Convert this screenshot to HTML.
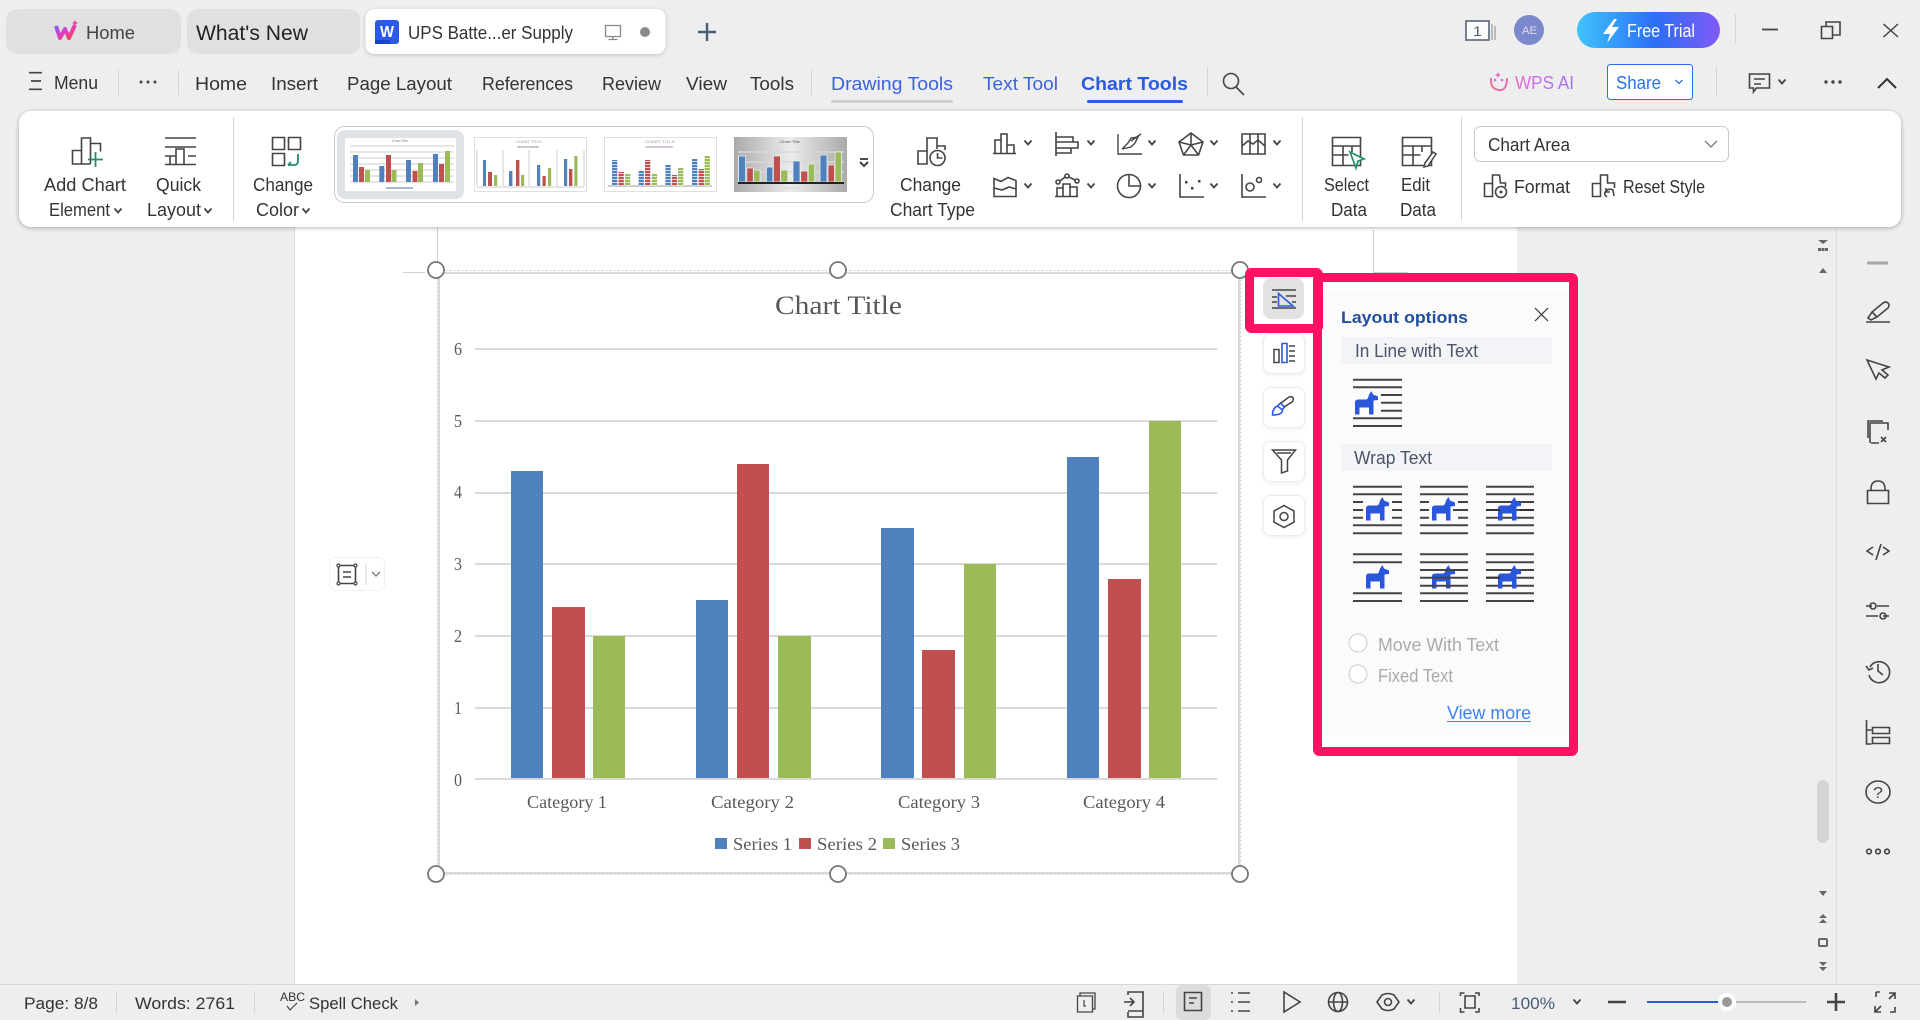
<!DOCTYPE html>
<html><head><meta charset="utf-8"><title>WPS Writer - Chart Tools</title>
<style>
html,body{margin:0;padding:0;background:#eee;width:1920px;height:1020px;overflow:hidden}
svg{display:block}
text{font-family:"Liberation Sans",sans-serif;font-size:18px;fill:#333}
.s{font-family:"Liberation Serif",serif;fill:#595959;font-size:18px}
.i{fill:none;stroke:#444;stroke-width:1.6}
.c{fill:none;stroke:#444;stroke-width:1.8}
.g{fill:none;stroke:#1d8f6b;stroke-width:1.8}
.b{fill:none;stroke:#2a5be0;stroke-width:1.6}
.l{stroke:#444;stroke-width:2;fill:none}
.d{stroke:#d5d5d5;stroke-width:1;fill:none}
.blur{filter:blur(.35px)}
</style></head><body>
<svg width="1920" height="1020" viewBox="0 0 1920 1020" xmlns="http://www.w3.org/2000/svg">
<defs>
<linearGradient id="ft" x1="0" x2="1" y1="0" y2="0"><stop offset="0" stop-color="#3fc4fb"/><stop offset=".55" stop-color="#2b6ef7"/><stop offset="1" stop-color="#8259f5"/></linearGradient>
<linearGradient id="wl" x1="0" x2="1" y1="0" y2="1"><stop offset="0" stop-color="#7a5cf6"/><stop offset=".5" stop-color="#e040c0"/><stop offset="1" stop-color="#f5404f"/></linearGradient>
<linearGradient id="ai" gradientUnits="userSpaceOnUse" x1="1490" x2="1575" y1="0" y2="0"><stop offset="0" stop-color="#f0709a"/><stop offset=".5" stop-color="#d070e0"/><stop offset="1" stop-color="#a070ee"/></linearGradient>
<linearGradient id="th4" x1="0" x2="1" y1="0" y2="0"><stop offset="0" stop-color="#aaa"/><stop offset=".5" stop-color="#ececec"/><stop offset="1" stop-color="#aaa"/></linearGradient>
<pattern id="pb" width="4" height="3" patternUnits="userSpaceOnUse"><rect width="4" height="2" fill="#4f81bd"/><rect y="2" width="4" height="1" fill="#c9d8ea"/></pattern>
<pattern id="pr" width="4" height="3" patternUnits="userSpaceOnUse"><rect width="4" height="2" fill="#c0504d"/><rect y="2" width="4" height="1" fill="#eccfce"/></pattern>
<pattern id="pg" width="4" height="3" patternUnits="userSpaceOnUse"><rect width="4" height="2" fill="#9bbb59"/><rect y="2" width="4" height="1" fill="#e0ebcd"/></pattern>
<symbol id="h" width="23" height="24" viewBox="0 0 23 24" overflow="visible"><path fill="#2a56dc" d="M14 3.500 16.500 0 18 3.500l5 2V9l-4.500.5v14H14v-7H4.500v7H0v-12q0-3 3-3h8q2 0 3-5z"/></symbol>
<symbol id="c" width="10" height="8" viewBox="0 0 10 8"><path d="M1.500 1.500 5 5.500l3.500-4" fill="none" stroke="#444" stroke-width="1.800"/></symbol>
</defs>

<rect width="1920" height="1020" fill="#eeeeee"/>
<!-- tabs -->
<rect x="6" y="9" width="175" height="45" rx="11" fill="#e0e0e0"/>
<rect x="187" y="9" width="173" height="45" rx="11" fill="#e0e0e0"/>
<rect x="365.500" y="9" width="300" height="45" rx="9" fill="#fff" style="filter:drop-shadow(0 1px 2px rgba(0,0,0,.18))"/>
<path d="M56 26l4 12 5-9 4 9 6-13" fill="none" stroke="url(#wl)" stroke-width="4" stroke-linejoin="round"/>
<path d="M74 22l1-2 1 2 2 1-2 1-1 2-1-2-2-1z" fill="#f0409c"/>
<text x="86" y="39" textLength="49" lengthAdjust="spacingAndGlyphs" style="fill:#444">Home</text>
<text x="196" y="40" textLength="112" lengthAdjust="spacingAndGlyphs" style="font-size:21px;fill:#222">What's New</text>
<rect x="375" y="20" width="24" height="24" rx="3" fill="#2a5be8"/><rect x="375" y="40" width="15" height="4" fill="#1b45c0"/>
<text x="380" y="37" textLength="14" lengthAdjust="spacingAndGlyphs" style="font-size:16px;font-weight:700;fill:#fff">W</text>
<text x="408" y="39" textLength="165" lengthAdjust="spacingAndGlyphs" style="fill:#333">UPS Batte...er Supply</text>
<path d="M605.500 25.500h15v11h-15zM613 36.500v3M608.500 39.500h9" class="d" style="stroke:#888;stroke-width:1.300"/>
<circle cx="645" cy="32" r="5" fill="#8a8a8a"/>
<path d="M707 23v18M698 32h18" stroke="#4a5a78" stroke-width="2.400"/>
<!-- top-right -->
<rect x="1466" y="21" width="23" height="19" fill="#fbfbfb" stroke="#5a6478" stroke-width="1.600"/>
<path d="M1492 24v16M1495 26v14" stroke="#999" stroke-width="1.200"/>
<text x="1473" y="36" textLength="9" lengthAdjust="spacingAndGlyphs" style="font-size:14px;fill:#4a5a78">1</text>
<circle cx="1529" cy="30" r="15" fill="#7c88cc"/>
<text x="1522" y="34" textLength="15" lengthAdjust="spacingAndGlyphs" style="font-size:11px;fill:#dde">AE</text>
<rect x="1577" y="12" width="143" height="36" rx="18" fill="url(#ft)"/>
<path d="M1614 19l-11 15h7l-3 9 12-16h-7l5-8z" fill="#fff"/>
<text x="1627" y="37" textLength="68" lengthAdjust="spacingAndGlyphs" style="font-size:18px;fill:#fff">Free Trial</text>
<path d="M1735.500 14v30" class="d"/>
<path d="M1762 29.500h16" stroke="#444" stroke-width="1.800"/>
<path d="M1821.500 26.500h11v12h-11zM1826 26v-4h14v13h-7.500" fill="none" stroke="#444" stroke-width="1.600"/>
<path d="M1883.500 24 1898 37M1898 24l-14.500 13" stroke="#444" stroke-width="1.500"/>
<!-- menu row -->
<path d="M29 72.700h13M31 81h10M29 89.300h13" stroke="#444" stroke-width="1.700"/>
<text x="54" y="89" textLength="44" lengthAdjust="spacingAndGlyphs">Menu</text>
<path d="M118.500 70v25M178.500 70v25M811.500 70v25M1207.500 67v30M1716.500 67v30" class="d"/>
<g fill="#444"><circle cx="141" cy="82" r="1.500"/><circle cx="148" cy="82" r="1.500"/><circle cx="155" cy="82" r="1.500"/></g>
<text x="195" y="90" textLength="52" lengthAdjust="spacingAndGlyphs">Home</text>
<text x="271" y="90" textLength="47" lengthAdjust="spacingAndGlyphs">Insert</text>
<text x="347" y="90" textLength="105" lengthAdjust="spacingAndGlyphs">Page Layout</text>
<text x="482" y="90" textLength="91" lengthAdjust="spacingAndGlyphs">References</text>
<text x="602" y="90" textLength="59" lengthAdjust="spacingAndGlyphs">Review</text>
<text x="686" y="90" textLength="41" lengthAdjust="spacingAndGlyphs">View</text>
<text x="750" y="90" textLength="44" lengthAdjust="spacingAndGlyphs">Tools</text>
<text x="831" y="90" textLength="122" lengthAdjust="spacingAndGlyphs" style="fill:#3a62e0">Drawing Tools</text>
<rect x="831" y="100" width="122" height="3" rx="1.500" fill="#cfcfcf"/>
<text x="983" y="90" textLength="75" lengthAdjust="spacingAndGlyphs" style="fill:#3a62e0">Text Tool</text>
<text x="1081" y="90" textLength="107" lengthAdjust="spacingAndGlyphs" style="font-weight:700;fill:#2a5be0">Chart Tools</text>
<rect x="1087" y="100" width="96" height="3" rx="1.500" fill="#2a5be0"/>
<circle cx="1231" cy="81" r="7.500" class="i"/><path d="M1236 87l8 8" class="i"/>
<path d="M1491 78q-1 11 8 12 8 1 8-12" fill="none" stroke="url(#ai)" stroke-width="2"/>
<circle cx="1495" cy="80" r="1.300" fill="#d070e0"/><circle cx="1502" cy="80" r="1.300" fill="#d070e0"/>
<path d="M1498 72l1 2 2 1-2 1-1 2-1-2-2-1 2-1z" fill="#e56ccf"/>
<text x="1515" y="89" textLength="59" lengthAdjust="spacingAndGlyphs" style="fill:url(#ai)">WPS AI</text>
<rect x="1607.500" y="64.500" width="85" height="35" rx="3" fill="#fff" stroke="#2a6ef0"/>
<text x="1616" y="89" textLength="45" lengthAdjust="spacingAndGlyphs" style="fill:#2a6ef0">Share</text>
<path d="M1675.500 80l3.500 3.500 3.500-3.500" fill="none" stroke="#2a6ef0" stroke-width="1.300"/>
<path d="M1749.500 74h20v14h-13l-3 4v-4h-4z" class="i"/><path d="M1754 79h11M1754 84h7" class="i"/>
<use href="#c" x="1777" y="78"/>
<g fill="#444"><circle cx="1826" cy="82" r="1.700"/><circle cx="1833" cy="82" r="1.700"/><circle cx="1840" cy="82" r="1.700"/></g>
<path d="M1878 88l9-9 9 9" fill="none" stroke="#333" stroke-width="2"/>

<!-- page -->
<rect x="294" y="220" width="1223" height="764" fill="#fff"/>
<path d="M294.500 220v764M1836.500 228v756" stroke="#dcdcdc"/>
<path d="M1373.500 230v42M1373 272.500h35M437.500 228v40M403 272.500h22" stroke="#cfcfcf"/>

<!-- ribbon -->
<rect x="19" y="111" width="1882" height="116" rx="12" fill="#fff" style="filter:drop-shadow(0 1px 2px rgba(0,0,0,.3))"/>
<path d="M233.500 117v104M1302.500 117v104M1461.500 117v104" class="d"/>

<path class="i" d="M72.500 150.500h9v13.500h-9zM81.500 164v-26h9v26M90.500 143.500h10v8M72.500 164h18"/><path class="g" d="M95.500 152v15M88 159.500h15"/>
<text x="44" y="191" textLength="82" lengthAdjust="spacingAndGlyphs">Add Chart</text>
<text x="49" y="216" textLength="61" lengthAdjust="spacingAndGlyphs">Element</text><use href="#c" x="113" y="207"/>
<path class="i" d="M165 138h31M165 147h31M165 156h8M188 156h8M170 164v-8h6v-7h8v15M176 156v8M165 164.500h31"/>
<text x="156" y="191" textLength="45" lengthAdjust="spacingAndGlyphs">Quick</text>
<text x="147" y="216" textLength="54" lengthAdjust="spacingAndGlyphs">Layout</text><use href="#c" x="203" y="207"/>
<path class="i" d="M272.500 137.500h12v12h-12zM288.500 137.500h12v12h-12zM272.500 153.500h12v12h-12z"/><path class="g" d="M298 154v7q0 4-4 4h-6M288 165l3-3"/>
<text x="253" y="191" textLength="60" lengthAdjust="spacingAndGlyphs">Change</text>
<text x="256" y="216" textLength="43" lengthAdjust="spacingAndGlyphs">Color</text><use href="#c" x="301" y="207"/>

<!-- gallery -->
<rect x="334.500" y="126.500" width="539" height="76" rx="10" fill="#fff" stroke="#c9c9c9"/>
<rect x="337" y="130" width="127" height="69" rx="8" fill="#dfe3e7"/>
<g class="blur">
<rect x="345" y="138" width="111" height="53" fill="#fff"/>
<path d="M350 146h104M350 152h104M350 158h104M350 164h104M350 170h104M350 176h104M350 182h104" stroke="#ddd" stroke-width="1.500"/>
<text x="392" y="142" textLength="16" lengthAdjust="spacingAndGlyphs" style="font-size:4px;fill:#777">Chart Title</text>
<g fill="#4f81bd"><rect x="353" y="155" width="5" height="27"/><rect x="379.300" y="166" width="5" height="16"/><rect x="406" y="160" width="5" height="22"/><rect x="433" y="154" width="5" height="28"/></g>
<g fill="#c0504d"><rect x="359" y="167" width="5" height="15"/><rect x="386" y="155" width="5" height="27"/><rect x="412.500" y="171" width="5" height="11"/><rect x="439" y="164" width="5" height="18"/></g>
<g fill="#9bbb59"><rect x="365" y="170" width="5" height="12"/><rect x="391.500" y="170" width="5" height="12"/><rect x="418" y="163" width="5" height="19"/><rect x="445" y="151" width="5" height="31"/></g>
<rect x="386" y="187" width="27" height="2" fill="#a8b8d0"/>

<rect x="474.500" y="137.500" width="112" height="54" fill="#fff" stroke="#e0e0e0"/>
<text x="516" y="143" textLength="26" lengthAdjust="spacingAndGlyphs" style="font-size:4px;fill:#999">CHART TITLE</text>
<path d="M477 150v36M503 150v36M529 150v36M557 150v36M584 150v36M477 187h107" stroke="#ddd" stroke-width="1.500"/>
<rect x="517" y="146" width="22" height="2" fill="#c8c8d8"/>
<g fill="#4f81bd"><rect x="483" y="160" width="3" height="26"/><rect x="509" y="171" width="3.400" height="15"/><rect x="537" y="165" width="3.200" height="21"/><rect x="564" y="159" width="3.200" height="27"/></g>
<g fill="#c0504d"><rect x="488" y="172" width="4" height="14"/><rect x="516" y="160" width="3.400" height="26"/><rect x="542.500" y="176" width="3.200" height="10"/><rect x="569" y="169" width="3.400" height="17"/></g>
<g fill="#9bbb59"><rect x="494" y="175" width="3.200" height="11"/><rect x="521" y="175" width="3.200" height="11"/><rect x="548" y="168" width="3.200" height="18"/><rect x="574.300" y="156" width="3.200" height="30"/></g>

<rect x="604.500" y="137.500" width="112" height="54" fill="#fff" stroke="#e0e0e0"/>
<text x="645" y="143" textLength="30" lengthAdjust="spacingAndGlyphs" style="font-size:4px;fill:#999">CHART TITLE</text>
<rect x="645" y="146" width="28" height="2" fill="#d8c8d8"/>
<path d="M608 186h104" stroke="#ccc" stroke-width="2"/>
<rect x="612" y="160" width="5.300" height="26" fill="url(#pb)"/><rect x="638.600" y="171" width="5.300" height="15" fill="url(#pb)"/><rect x="665.400" y="165" width="5.300" height="21" fill="url(#pb)"/><rect x="692" y="159" width="5.300" height="27" fill="url(#pb)"/>
<rect x="618.500" y="172" width="5.300" height="14" fill="url(#pr)"/><rect x="645" y="160" width="5.300" height="26" fill="url(#pr)"/><rect x="671.800" y="175" width="5.300" height="11" fill="url(#pr)"/><rect x="698.600" y="169" width="5.300" height="17" fill="url(#pr)"/>
<rect x="625" y="174" width="5.300" height="12" fill="url(#pg)"/><rect x="651.800" y="174" width="5.300" height="12" fill="url(#pg)"/><rect x="678" y="168" width="5.300" height="18" fill="url(#pg)"/><rect x="704.600" y="156" width="5.300" height="30" fill="url(#pg)"/>

<rect x="734" y="137" width="113" height="55" fill="url(#th4)"/>
<text x="780" y="143" textLength="20" lengthAdjust="spacingAndGlyphs" style="font-size:4px;fill:#555">Chart Title</text>
<path d="M738 152h106M738 162h106M738 172h106" stroke="#d8d8d8" stroke-width="1.500"/>
<g stroke="#e8eef6" stroke-width=".8">
<g fill="#4f81bd"><rect x="738.600" y="156" width="7" height="26"/><rect x="766.400" y="167" width="6.500" height="15"/><rect x="793" y="161" width="7" height="21"/><rect x="820" y="155" width="7" height="27"/></g>
<g fill="#c0504d"><rect x="746.800" y="168" width="6.500" height="14"/><rect x="773.400" y="156" width="7" height="26"/><rect x="800.700" y="171" width="7" height="11"/><rect x="828" y="165" width="6.500" height="17"/></g>
<g fill="#9bbb59"><rect x="753.600" y="170" width="6.500" height="12"/><rect x="780.700" y="170" width="7" height="12"/><rect x="808.200" y="164" width="6.500" height="18"/><rect x="835" y="152" width="6.500" height="30"/></g>
</g>
<rect x="738" y="182" width="106" height="2" fill="#222"/>
<rect x="776" y="187" width="26" height="2" fill="#ddd"/>
</g>
<path d="M860 159h8M860 162l4 4 4-4" fill="none" stroke="#333" stroke-width="1.800"/>

<path class="i" d="M918 151h9v13h-9zM927 164v-26h10v11M937 146h8v4"/><circle cx="937.500" cy="158" r="7.500" fill="#fff" stroke="#444" stroke-width="1.600"/><path class="i" d="M937.500 153v5h5"/>
<text x="900" y="191" textLength="61" lengthAdjust="spacingAndGlyphs">Change</text>
<text x="890" y="216" textLength="85" lengthAdjust="spacingAndGlyphs">Chart Type</text>

<!-- chart type icons -->
<path class="i" d="M993 153.500h23M995 153v-13h6v13M1001 153v-19h6v19M1007 153v-8h7v8"/><use href="#c" x="1023" y="139"/>
<path class="i" d="M1056 132v24M1056 137h17v5h-17zM1056 142h22v6h-22zM1056 148h15v5h-15z"/><use href="#c" x="1086" y="139"/>
<path class="i" style="stroke-width:1.400" d="M1118 134v20h24M1122 149l6-6 3-5 7-1-3 6-4 4-9 2M1131 141l10-7"/><use href="#c" x="1147" y="139"/>
<path class="i" d="M1191 133l12 9-4.500 13h-15L1179 142zM1191 145v-12M1191 145l12-3M1191 145l7.500 10M1191 145l-7.500 10M1191 145l-12-3"/><use href="#c" x="1209" y="139"/>
<path class="i" d="M1242 134h23v20h-23zM1250 134v20M1258 134v20M1242 146l6-5 5 3 5-4 7 6"/><use href="#c" x="1272" y="139"/>
<path class="i" d="M994 196.500v-18l7 3 7-4 8 3v16zM994 188l8 2 7-3 7 2"/><use href="#c" x="1023" y="182"/>
<path class="i" d="M1055 196.500h23M1057 196v-8h6v8M1063 196v-12h7v12M1070 196v-9h7v9"/><circle class="i" cx="1058" cy="182" r="2"/><circle class="i" cx="1067" cy="176" r="2"/><circle class="i" cx="1077" cy="181" r="2"/><path class="i" d="M1060 181l5-4M1069 177l6 3"/><use href="#c" x="1086" y="182"/>
<circle class="i" cx="1129" cy="186" r="11.500"/><path class="i" d="M1129 174.500V186h11.500"/><use href="#c" x="1147" y="182"/>
<path class="i" d="M1180 174v23h24"/><g fill="#444"><rect x="1185" y="181" width="2.500" height="2.500"/><rect x="1191" y="187" width="2.500" height="2.500"/><rect x="1198" y="180" width="2.500" height="2.500"/></g><use href="#c" x="1209" y="182"/>
<path class="i" d="M1242 174v23h24"/><circle class="i" cx="1250" cy="187" r="4"/><circle class="i" cx="1259" cy="180" r="2.500"/><use href="#c" x="1272" y="182"/>

<path class="i" d="M1332.500 137.500h28v28h-28zM1332.500 146h28M1332.500 155h16M1343 146v19M1352 146v6"/><path d="M1350 152l14 7-6 2-2 7z" fill="#fff" stroke="#1d8f6b" stroke-width="1.700"/>
<text x="1324" y="191" textLength="45" lengthAdjust="spacingAndGlyphs">Select</text>
<text x="1331" y="216" textLength="36" lengthAdjust="spacingAndGlyphs">Data</text>
<path class="i" d="M1402.500 137.500h29v28h-29zM1402.500 146h29M1402.500 155h18M1413 146v19M1422 146v6"/><path d="M1433 152l3 2-8 12-4 1 1-4z" fill="#fff" stroke="#444" stroke-width="1.500"/>
<text x="1401" y="191" textLength="29" lengthAdjust="spacingAndGlyphs">Edit</text>
<text x="1400" y="216" textLength="36" lengthAdjust="spacingAndGlyphs">Data</text>

<rect x="1474.500" y="126.500" width="254" height="35" rx="6" fill="#fff" stroke="#c9c9c9"/>
<text x="1488" y="151" textLength="82" lengthAdjust="spacingAndGlyphs">Chart Area</text>
<path d="M1705 141l6 6 6-6" fill="none" stroke="#777" stroke-width="1.300"/>
<path class="i" d="M1484.500 183.500h8v13h-8zM1492.500 196V175h7l1 8h5v4"/><circle cx="1501" cy="192" r="5.500" fill="#fff" stroke="#444" stroke-width="1.600"/><circle cx="1501" cy="192" r="1.500" fill="#444"/>
<text x="1514" y="193" textLength="56" lengthAdjust="spacingAndGlyphs">Format</text>
<path class="i" d="M1592.500 183.500h8v13h-8zM1600.500 183v-8h7v8h7v5M1607 197q-4-3-1-6 3-3 7-1l1 6M1606 188v4h4"/>
<text x="1623" y="193" textLength="82" lengthAdjust="spacingAndGlyphs">Reset Style</text>

<!-- chart -->
<rect x="439" y="273" width="800" height="600" fill="#fff" stroke="#d9d9d9" stroke-width="2"/>
<rect x="437.500" y="270.500" width="803" height="604" fill="none" stroke="#ccc" stroke-dasharray="2 2"/>
<g stroke="#d9d9d9" stroke-width="2">
<path d="M475 349h742M475 421h742M475 493h742M475 564h742M475 636h742M475 708h742M475 779h742"/>
</g>
<text class="s" x="775" y="314" textLength="127" lengthAdjust="spacingAndGlyphs" style="font-size:26px">Chart Title</text>
<g>
<text class="s" x="454" y="355" textLength="8" lengthAdjust="spacingAndGlyphs">6</text><text class="s" x="454" y="427" textLength="8" lengthAdjust="spacingAndGlyphs">5</text><text class="s" x="454" y="498" textLength="8" lengthAdjust="spacingAndGlyphs">4</text><text class="s" x="454" y="570" textLength="8" lengthAdjust="spacingAndGlyphs">3</text><text class="s" x="454" y="642" textLength="8" lengthAdjust="spacingAndGlyphs">2</text><text class="s" x="454" y="714" textLength="8" lengthAdjust="spacingAndGlyphs">1</text><text class="s" x="454" y="786" textLength="8" lengthAdjust="spacingAndGlyphs">0</text>
</g>
<g fill="#4f81bd"><rect x="511" y="471" width="32" height="307"/><rect x="696" y="600" width="32" height="178"/><rect x="881" y="528" width="33" height="250"/><rect x="1067" y="457" width="32" height="321"/></g>
<g fill="#c0504d"><rect x="552" y="607" width="33" height="171"/><rect x="737" y="464" width="32" height="314"/><rect x="922" y="650" width="33" height="128"/><rect x="1108" y="579" width="33" height="199"/></g>
<g fill="#9bbb59"><rect x="593" y="636" width="32" height="142"/><rect x="778" y="636" width="33" height="142"/><rect x="964" y="564" width="32" height="214"/><rect x="1149" y="421" width="32" height="357"/></g>
<text class="s" x="527" y="808" textLength="80" lengthAdjust="spacingAndGlyphs">Category 1</text>
<text class="s" x="711" y="808" textLength="83" lengthAdjust="spacingAndGlyphs">Category 2</text>
<text class="s" x="898" y="808" textLength="82" lengthAdjust="spacingAndGlyphs">Category 3</text>
<text class="s" x="1083" y="808" textLength="82" lengthAdjust="spacingAndGlyphs">Category 4</text>
<rect x="715" y="838" width="12" height="11" fill="#4f81bd"/><text class="s" x="733" y="850" textLength="59" lengthAdjust="spacingAndGlyphs">Series 1</text>
<rect x="799" y="838" width="12" height="11" fill="#c0504d"/><text class="s" x="817" y="850" textLength="60" lengthAdjust="spacingAndGlyphs">Series 2</text>
<rect x="883" y="838" width="12" height="11" fill="#9bbb59"/><text class="s" x="901" y="850" textLength="59" lengthAdjust="spacingAndGlyphs">Series 3</text>
<g fill="#fff" stroke="#777" stroke-width="1.800">
<circle cx="436" cy="270" r="8"/><circle cx="838" cy="270" r="8"/><circle cx="1240" cy="270" r="8"/><circle cx="436" cy="874" r="8"/><circle cx="838" cy="874" r="8"/><circle cx="1240" cy="874" r="8"/>
</g>
<!-- anchor button -->
<rect x="329.500" y="557.500" width="55" height="33" rx="6" fill="#fff" stroke="#f0f0f0"/>
<path class="i" d="M338.500 565.500h17v18h-17zM343 572h8M343 577h8"/>
<g fill="#fff" stroke="#444" stroke-width="1.200"><circle cx="338.500" cy="565.500" r="1.500"/><circle cx="355.500" cy="565.500" r="1.500"/><circle cx="338.500" cy="583.500" r="1.500"/><circle cx="355.500" cy="583.500" r="1.500"/></g>
<path d="M366 563v22" class="d"/><path d="M372 572l4 4 4-4" fill="none" stroke="#777" stroke-width="1.300"/>

<!-- side buttons -->
<g fill="#fff" stroke="#ececec" style="filter:drop-shadow(0 1px 2px rgba(0,0,0,.07))">
<rect x="1263.500" y="333.500" width="41" height="40" rx="7"/><rect x="1263.500" y="387.500" width="41" height="40" rx="7"/><rect x="1263.500" y="441.500" width="41" height="40" rx="7"/><rect x="1263.500" y="495.500" width="41" height="40" rx="7"/>
</g>
<rect x="1263" y="278" width="41" height="41" rx="8" fill="#e2e2e2"/>
<path d="M1272 290h24M1272 297h5M1272 302h5M1272 308h24M1286 296h10M1292 302h4" stroke="#444" stroke-width="1.400"/>
<path class="b" d="M1278.500 293.500V306H1293z"/>
<path class="c" style="stroke-width:1.500" d="M1274 349.500h5v13h-5z"/><path class="b" d="M1282 343.500h5v19h-5z"/><path d="M1289 346h6M1289 351h6M1289 356h6M1289 361h6" stroke="#444" stroke-width="1.400"/>
<path class="b" d="M1272.500 415q0-7 5-9l5 4q0 5-10 5zM1277.500 406l3-3 4 4-2.500 3"/><path d="M1281 403l8-6q3-1 4 1t-1 4l-8 5" fill="none" stroke="#444" stroke-width="1.500"/>
<path d="M1272.500 450h23l-8 10v11l-6 2v-13z M1277 453h14" fill="none" stroke="#444" stroke-width="1.500"/>
<path d="M1284 505.500l10 5.500v11l-10 5.500-10-5.500v-11z" fill="none" stroke="#444" stroke-width="1.500"/><circle cx="1284" cy="516.500" r="4" fill="none" stroke="#444" stroke-width="1.500"/>

<!-- panel -->
<rect x="1323" y="282" width="246" height="465" fill="#fff"/>
<rect x="1323" y="290" width="246" height="447" fill="#fbfbfc"/>
<rect x="1317.500" y="277.500" width="256" height="474" rx="2" fill="none" stroke="#ff125f" stroke-width="9"/>
<rect x="1249.500" y="272.500" width="69" height="56" rx="2" fill="none" stroke="#ff125f" stroke-width="9"/>
<text x="1341" y="323" textLength="127" lengthAdjust="spacingAndGlyphs" style="font-weight:700;fill:#234e9b;font-size:17px">Layout options</text>
<path d="M1535 308l13 13M1548 308l-13 13" stroke="#333" stroke-width="1.200"/>
<rect x="1341" y="337" width="211" height="27" fill="#f3f4f7"/>
<text x="1355" y="357" textLength="123" lengthAdjust="spacingAndGlyphs" style="fill:#4a5568">In Line with Text</text>
<rect x="1341" y="444" width="211" height="27" fill="#f3f4f7"/>
<text x="1354" y="464" textLength="78" lengthAdjust="spacingAndGlyphs" style="fill:#4a5568">Wrap Text</text>
<!-- icon 1 -->
<path class="l" d="M1353 379.700h49M1353 387.300h49M1381 395h21M1381 402.700h21M1381 410.700h21M1353 418.300h49M1353 426h49"/>
<use href="#h" x="1355" y="391"/>
<!-- row 1 -->
<path class="l" d="M1353 486.700h49M1353 494.300h49M1353 502h10M1392 502h10M1353 510h10M1392 510h10M1353 517.700h10M1392 517.700h10M1353 525.300h49M1353 533.300h49"/>
<use href="#h" x="1366" y="497"/>
<path class="l" d="M1420 486.700h48M1420 494.300h48M1420 502h9M1458 502h10M1420 510h9M1453 510h15M1420 517.700h9M1458 517.700h10M1420 525.300h48M1420 533.300h48"/>
<use href="#h" x="1432" y="497"/>
<path class="l" d="M1486 486.700h48M1486 494.300h48M1486 502h48M1486 510h48M1486 517.700h48M1486 525.300h48M1486 533.300h48"/>
<use href="#h" x="1498" y="497"/>
<path class="l" d="M1486 510h14M1520 510h14" style="stroke:#333"/>
<!-- row 2 -->
<path class="l" d="M1353 554.300h49M1353 562.300h49M1353 593.300h49M1353 601h49"/>
<use href="#h" x="1366" y="565"/>
<use href="#h" x="1432" y="565"/>
<path class="l" d="M1420 554.300h48M1420 562.300h48M1420 570h48M1420 577.700h48M1420 585.700h48M1420 593.300h48M1420 601h48"/>
<path class="l" d="M1486 554.300h48M1486 562.300h48M1486 570h48M1486 577.700h48M1486 585.700h48M1486 593.300h48M1486 601h48"/>
<use href="#h" x="1498" y="565"/>
<path class="l" d="M1486 577.700h14" style="stroke:#333"/>
<circle cx="1358" cy="643" r="9" fill="#fff" stroke="#ccc"/>
<text x="1378" y="651" textLength="121" lengthAdjust="spacingAndGlyphs" style="fill:#aaa">Move With Text</text>
<circle cx="1358" cy="674" r="9" fill="#fff" stroke="#ccc"/>
<text x="1378" y="682" textLength="75" lengthAdjust="spacingAndGlyphs" style="fill:#aaa">Fixed Text</text>
<text x="1447" y="719" textLength="84" lengthAdjust="spacingAndGlyphs" style="fill:#3b82f6">View more</text>
<path d="M1447 721.500h84" stroke="#3b82f6"/>

<!-- scrollbar -->
<g fill="#666">
<path d="M1818 240h10l-5 4zM1818 248h3v3h-3zM1825 248h3v3h-3zM1821.500 248h3v3h-3z"/>
<path d="M1819 273l4-5 4 5z"/>
<path d="M1819 891h8l-4 5z"/>
<path d="M1819 918l4-4 4 4zM1819 923l4-4 4 4z"/>
<path d="M1819 962l4 4 4-4zM1819 967l4 4 4-4z"/>
</g>
<rect x="1819" y="939" width="8" height="7" rx="1" fill="none" stroke="#666" stroke-width="2"/>
<rect x="1817" y="780" width="12" height="63" rx="6" fill="#d4d4d4"/>

<!-- right sidebar -->
<path d="M1867 263h21" stroke="#a8a8a8" stroke-width="3"/>
<path class="i" d="M1866 322h24M1868 318l4-6 11-9q3-2 5 0t0 5l-11 9-6 3zM1872 312l5 5"/>
<path class="i" d="M1867 360l22 7-7 3 6 5-3 3-6-5-3 6z"/>
<path class="i" d="M1868 438v-17h15M1870 443v-20h18v7M1871 443h8M1881 437l5 5M1886 437l-5 5"/>
<path class="i" d="M1867.500 490.500h21v13h-21zM1871 490v-1q0-8 7-8t7 8v1"/>
<path class="i" d="M1873 547l-6 4 6 4M1883 547l6 4-6 4M1881 544l-5 16"/>
<path class="i" d="M1866 606h6M1877 606h12M1866 616h12M1883 616h6"/><circle class="i" cx="1873" cy="606" r="3"/><circle class="i" cx="1883" cy="616" r="3"/>
<path class="i" d="M1870 667a10.500 10.500 0 1 1-1 8M1866 666l3 4 4-2M1878 664v7l5 4"/>
<path class="i" d="M1866.500 720v24h5M1866.500 730h5M1872.500 727.500h17v6h-17zM1872.500 737.500h17v6h-17z"/>
<ellipse class="i" cx="1878" cy="792" rx="12" ry="11"/>
<text x="1873" y="798" textLength="10" lengthAdjust="spacingAndGlyphs" style="font-size:16px;fill:#444">?</text>
<g class="i"><circle cx="1869" cy="851.500" r="2.300"/><circle cx="1878" cy="851.500" r="2.300"/><circle cx="1887" cy="851.500" r="2.300"/></g>

<!-- status bar -->
<rect x="0" y="984" width="1920" height="36" fill="#eeeeee"/>
<path d="M0 984.500h1920" stroke="#d8d8d8"/>
<text x="24" y="1009" textLength="74" lengthAdjust="spacingAndGlyphs" style="font-size:17px">Page: 8/8</text>
<path d="M116.500 991v22M254.500 991v22M1163.500 991v22M1439.500 991v22" class="d"/>
<text x="135" y="1009" textLength="100" lengthAdjust="spacingAndGlyphs" style="font-size:17px">Words: 2761</text>
<text x="280" y="1001" textLength="25" lengthAdjust="spacingAndGlyphs" style="font-size:12px">ABC</text>
<path d="M287 1006l3 4 7-7" fill="none" stroke="#444" stroke-width="1.200"/>
<text x="309" y="1009" textLength="89" lengthAdjust="spacingAndGlyphs" style="font-size:17px">Spell Check</text>
<path d="M415 999l4 3.500-4 3.500z" fill="#777"/>
<path d="M1077.500 996h15v16h-15zM1080 996v-3h15v16h-2" fill="none" stroke="#444" stroke-width="1.300"/><path d="M1084 1000v6h2" class="i" style="stroke-width:1.200"/>
<path class="i" d="M1128 995v-3h15v25h-15v-5M1128 1011h15M1124 1002h10M1130 998l4 4-4 4"/>
<rect x="1176" y="985" width="35" height="35" rx="6" fill="#dcdcdc"/>
<path class="i" d="M1184.500 992.500h17v18h-17zM1189 998h8M1189 1003h5"/>
<path class="i" d="M1238 993h12M1238 1002h12M1238 1011h12M1231 993h2M1231 1002h2M1231 1011h2"/>
<path class="i" d="M1284 992v20l16-10z"/>
<circle class="i" cx="1338" cy="1002" r="9.500"/><ellipse class="i" cx="1338" cy="1002" rx="4.500" ry="9.500"/><path class="i" d="M1328.500 1002h19"/>
<path class="i" d="M1377 1002l5-7q6-3 12 0l5 7-5 7q-6 3-12 0z"/><circle class="i" cx="1388" cy="1002" r="3.500"/>
<use href="#c" x="1406" y="998"/>
<path class="i" d="M1460.500 996v-3h4M1475 993h4v3M1479 1008v4h-4M1464.500 1012h-4v-4M1465 996h10v12h-10z"/>
<text x="1511" y="1009" textLength="44" lengthAdjust="spacingAndGlyphs" style="font-size:17px;fill:#4a5a78">100%</text>
<use href="#c" x="1572" y="998"/>
<path d="M1608 1002h18" stroke="#444" stroke-width="2.600"/>
<path d="M1647 1002h72" stroke="#2a5be0" stroke-width="2"/><path d="M1727 1002h79" stroke="#bbb" stroke-width="2"/>
<circle cx="1727" cy="1002" r="9" fill="#fff"/><circle cx="1727" cy="1002" r="5" fill="#999"/>
<path d="M1827 1002h18M1836 993v18" stroke="#444" stroke-width="2.600"/>
<path class="i" d="M1889 993h6v6M1895 993l-6 6M1881 1012h-6v-6M1875 1012l6-6M1876 992v5M1876 992h4M1895 1007v5h-5"/>
</svg>
</body></html>
